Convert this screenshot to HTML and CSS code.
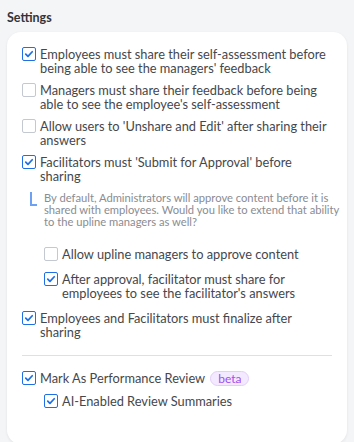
FILE: index.html
```html
<!DOCTYPE html>
<html lang="en">
<head>
  <meta charset="UTF-8" />
  <meta name="viewport" content="width=device-width, initial-scale=1.0"/>
  <title>Settings</title>
  <link rel="stylesheet" href="styles.css">
</head>
<body>
  <h3 class="title">Settings</h3>
  <div class="card">
    <label class="opt">
      <span class="box on"><svg viewBox="0 0 14 14"><path d="M3.2 7.2 L5.8 9.8 L10.8 4.4" /></svg></span>
      <span class="text">Employees must share their self-assessment before being able to see the managers' feedback</span>
    </label>
    <label class="opt">
      <span class="box"></span>
      <span class="text">Managers must share their feedback before being able to see the employee's self-assessment</span>
    </label>
    <label class="opt">
      <span class="box"></span>
      <span class="text">Allow users to 'Unshare and Edit' after sharing their answers</span>
    </label>
    <label class="opt">
      <span class="box on"><svg viewBox="0 0 14 14"><path d="M3.2 7.2 L5.8 9.8 L10.8 4.4" /></svg></span>
      <span class="text">Facilitators must 'Submit for Approval' before sharing</span>
    </label>

    <div class="note">
      <span class="corner"></span>
      By default, Administrators will approve content before it is shared with employees. Would you like to extend that ability to the upline managers as well?
    </div>

    <label class="opt sub first">
      <span class="box"></span>
      <span class="text">Allow upline managers to approve content</span>
    </label>
    <label class="opt sub">
      <span class="box on"><svg viewBox="0 0 14 14"><path d="M3.2 7.2 L5.8 9.8 L10.8 4.4" /></svg></span>
      <span class="text">After approval, facilitator must share for employees to see the facilitator's answers</span>
    </label>
    <label class="opt">
      <span class="box on"><svg viewBox="0 0 14 14"><path d="M3.2 7.2 L5.8 9.8 L10.8 4.4" /></svg></span>
      <span class="text">Employees and Facilitators must finalize after sharing</span>
    </label>

    <hr class="divider">

    <label class="opt">
      <span class="box on"><svg viewBox="0 0 14 14"><path d="M3.2 7.2 L5.8 9.8 L10.8 4.4" /></svg></span>
      <span class="text">Mark As Performance Review <span class="beta">beta</span></span>
    </label>
    <label class="opt sub">
      <span class="box on"><svg viewBox="0 0 14 14"><path d="M3.2 7.2 L5.8 9.8 L10.8 4.4" /></svg></span>
      <span class="text">AI-Enabled Review Summaries</span>
    </label>
  </div>
</body>
</html>
```

FILE: styles.css
```css
* {
  box-sizing: border-box;
}

body {
  margin: 0;
  padding: 0 7px;
  background-color: #f4f5f7;
  font-family: Lato, "Open Sans", sans-serif;
  color: #45474c;
}

.title {
  margin: 0;
  padding-top: 10px;
  height: 32px;
  font-size: 12.5px;
  font-weight: 700;
  color: #333338;
}

.card {
  background-color: #fff;
  border-radius: 14px;
  padding: 15px 15px 25px 15px;
  box-shadow: 0 1px 3px rgba(0, 0, 0, 0.08);
}

.opt {
  display: flex;
  align-items: flex-start;
  gap: 4px;
  font-size: 12.8px;
  line-height: 14px;
  margin-bottom: 8px;
}

.opt.sub {
  padding-left: 22px;
  margin-bottom: 11px;
}

.opt.sub.first {
  margin-top: 19px;
}

.box {
  flex: none;
  width: 14px;
  height: 14px;
  border: 1px solid #c4c8d0;
  border-radius: 2px;
  background-color: #fff;
}

.box.on {
  border-color: #1f6fe5;
}

.box svg {
  display: block;
  width: 12px;
  height: 12px;
}

.box svg path {
  fill: none;
  stroke: #1f6fe5;
  stroke-width: 2;
  stroke-linecap: round;
  stroke-linejoin: round;
}

.note {
  position: relative;
  margin: 9px -8px 0 22px;
  font-size: 11.2px;
  line-height: 12px;
  color: #8a8c92;
}

.corner {
  position: absolute;
  left: -14px;
  top: 0;
  width: 7px;
  height: 14px;
  border-left: 2px solid #6fa1f2;
  border-bottom: 2px solid #6fa1f2;
}

.divider {
  border: none;
  border-top: 1px solid #dde1e7;
  margin: 16px 0 15px 0;
}

.beta {
  display: inline-block;
  margin-left: 2px;
  padding: 0 7px;
  height: 15px;
  line-height: 13px;
  border: 1px solid #e2cdfb;
  border-radius: 8px;
  background-color: #f4eaff;
  color: #a04ff0;
  font-size: 12px;
}
```
